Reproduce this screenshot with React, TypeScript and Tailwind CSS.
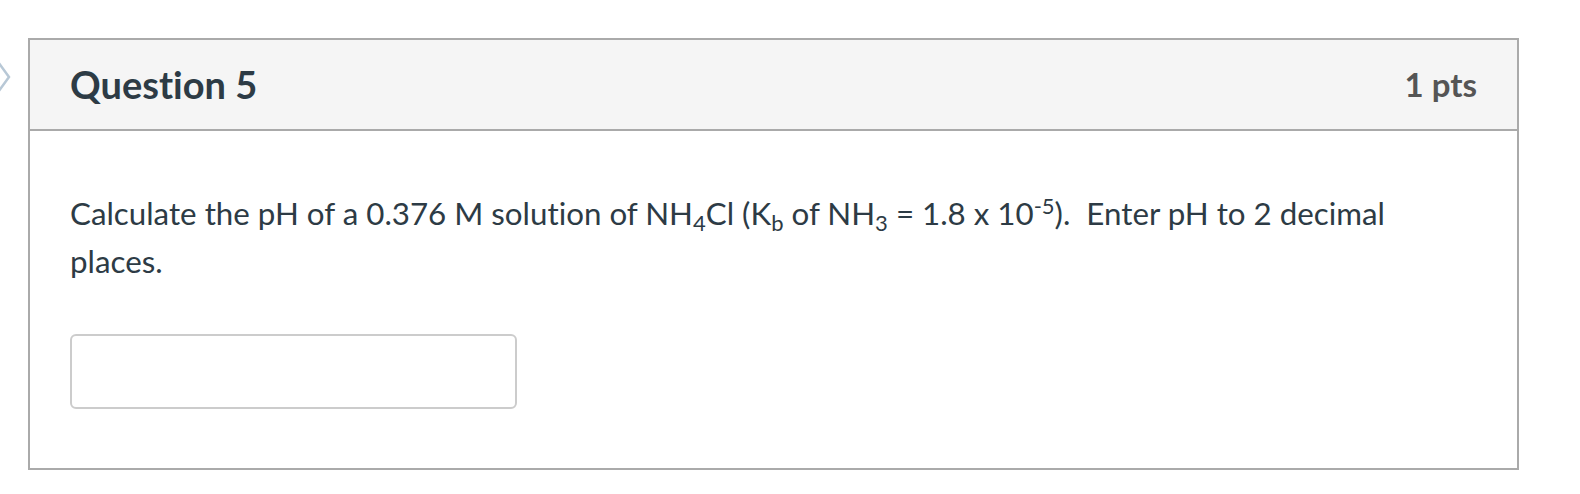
export default function App() {
  return (
    <div className="relative w-[1580px] h-[494px] bg-white overflow-hidden [font-variant-ligatures:none]" style={{ fontFamily: 'Lato, "Noto Sans", sans-serif' }}>
      {/* left chevron */}
      <svg className="absolute left-[-6px] top-[57px]" width="18" height="40" viewBox="0 0 18 40">
        <path d="M2 2 L15 20 L2 38" fill="none" stroke="#b8c8d6" strokeWidth="2.5" />
      </svg>

      <div className="pt-[38px] pl-[28px]">
        <div className="w-[1491px] h-[432px] border-2 border-[#aaaaaa] flex flex-col">
          <div className="h-[91px] shrink-0 bg-[#f5f5f5] border-b-2 border-[#aaaaaa] flex items-center justify-between pl-[40px] pr-[40px]">
            <h2 className="text-[38px] font-bold text-[#2d3b45]">Question 5</h2>
            <span className="text-[33px] font-bold text-[#555555]">1 pts</span>
          </div>
          <div className="pl-[40px] pr-[40px] pt-[58px]">
            <p className="text-[31.3px] leading-[48px] text-[#2d3b45] w-[1380px]">
              Calculate the pH of a 0.376 M solution of NH<sub className="text-[22px] leading-none">4</sub>Cl (K<sub className="text-[22px] leading-none">b</sub> of NH<sub className="text-[22px] leading-none">3</sub> = 1.8 x 10<sup className="text-[22px] leading-none">-5</sup>).&nbsp; Enter pH to 2 decimal places.
            </p>
            <input
              type="text"
              className="block mt-[49px] w-[447px] h-[75px] border-2 border-[#cccccc] rounded-[6px] bg-white outline-none"
            />
          </div>
        </div>
      </div>
    </div>
  )
}
